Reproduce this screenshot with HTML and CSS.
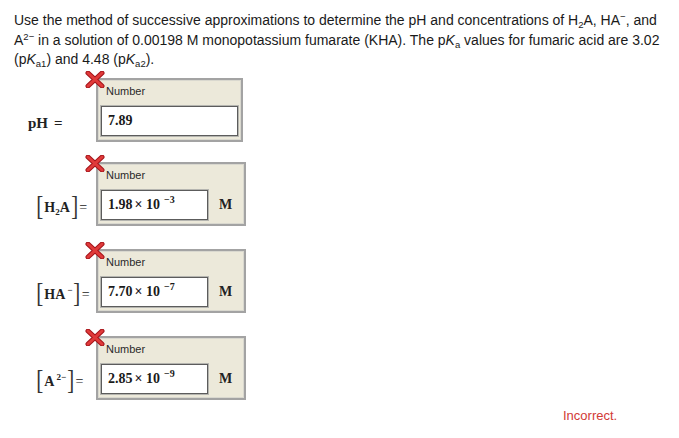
FILE: index.html
```html
<!DOCTYPE html>
<html>
<head>
<meta charset="utf-8">
<link rel="stylesheet" href="styles.css">
</head>
<body>
<p class="q">Use the method of successive approximations to determine the pH and concentrations of H<sub>2</sub>A, HA<sup>−</sup>, and A<sup>2−</sup> in a solution of 0.00198 M monopotassium fumarate (KHA). The p<i>K</i><sub>a</sub> values for fumaric acid are 3.02 (p<i>K</i><sub>a1</sub>) and 4.48 (p<i>K</i><sub>a2</sub>).</p>

<div class="row r1">
  <div class="lab lab-ph">pH<span class="eq">=</span></div>
  <div class="box box-wide">
    <svg class="x" width="20" height="17" viewBox="0 0 20 17"><path d="M3 2 L17 15 M17 2 L3 15" stroke="#a3141a" stroke-width="5" stroke-linecap="round"/><path d="M3 2 L17 15 M17 2 L3 15" stroke="#e03a3a" stroke-width="3" stroke-linecap="round"/></svg>
    <div class="num">Number</div>
    <div class="fields"><div class="inp inp-wide"><span>7.89</span></div></div>
  </div>
</div>

<div class="row r2">
  <div class="lab"><span class="br">[</span><b>H<sub>2</sub>A</b><span class="br">]</span>=</div>
  <div class="box">
    <svg class="x" width="20" height="17" viewBox="0 0 20 17"><path d="M3 2 L17 15 M17 2 L3 15" stroke="#a3141a" stroke-width="5" stroke-linecap="round"/><path d="M3 2 L17 15 M17 2 L3 15" stroke="#e03a3a" stroke-width="3" stroke-linecap="round"/></svg>
    <div class="num">Number</div>
    <div class="fields"><div class="inp"><span>1.98<span class="t">×</span> 10<sup class="e">−3</sup></span></div><div class="unit">M</div></div>
  </div>
</div>

<div class="row r3">
  <div class="lab"><span class="br">[</span><b>HA<sup class="c">−</sup></b><span class="br">]</span>=</div>
  <div class="box">
    <svg class="x" width="20" height="17" viewBox="0 0 20 17"><path d="M3 2 L17 15 M17 2 L3 15" stroke="#a3141a" stroke-width="5" stroke-linecap="round"/><path d="M3 2 L17 15 M17 2 L3 15" stroke="#e03a3a" stroke-width="3" stroke-linecap="round"/></svg>
    <div class="num">Number</div>
    <div class="fields"><div class="inp"><span>7.70<span class="t">×</span> 10<sup class="e">−7</sup></span></div><div class="unit">M</div></div>
  </div>
</div>

<div class="row r4">
  <div class="lab"><span class="br">[</span><b>A<sup class="c">2−</sup></b><span class="br">]</span>=</div>
  <div class="box">
    <svg class="x" width="20" height="17" viewBox="0 0 20 17"><path d="M3 2 L17 15 M17 2 L3 15" stroke="#a3141a" stroke-width="5" stroke-linecap="round"/><path d="M3 2 L17 15 M17 2 L3 15" stroke="#e03a3a" stroke-width="3" stroke-linecap="round"/></svg>
    <div class="num">Number</div>
    <div class="fields"><div class="inp"><span>2.85<span class="t">×</span> 10<sup class="e">−9</sup></span></div><div class="unit">M</div></div>
  </div>
</div>

<div class="result">Incorrect.</div>
</body>
</html>
```

FILE: styles.css
```css
html, body {
  margin: 0;
  padding: 0;
  background: #ffffff;
}
body {
  font-family: "Liberation Sans", Arial, sans-serif;
  color: #1a1a1a;
  width: 679px;
  height: 438px;
  overflow: hidden;
}
.q {
  margin: 0;
  padding: 11px 0 0 14px;
  width: 664px;
  font-size: 14px;
  letter-spacing: 0;
  line-height: 19.5px;
}
.q sub, .q sup {
  font-size: 9.5px;
  line-height: 0;
}
.q sub { vertical-align: -3px; }
.q sup { vertical-align: 5px; }

.row {
  display: flex;
  align-items: flex-end;
}
.r1 { margin-top: 8px; }
.r2 { margin-top: 20px; }
.r3 { margin-top: 23px; }
.r4 { margin-top: 23px; }

.lab {
  width: 96px;
  box-sizing: border-box;
  padding-left: 35px;
  height: 36px;
  display: flex;
  align-items: center;
  font-family: "Liberation Serif", "Times New Roman", serif;
  font-size: 14px;
  color: #222;
}
.lab-ph {
  padding-left: 28px;
  font-weight: bold;
  font-size: 15px;
}
.eq {
  margin-left: 6px;
  font-weight: bold;
}
.lab b {
  font-weight: bold;
}
.lab sub {
  font-size: 9px;
  line-height: 0;
  vertical-align: -3px;
}
.lab sup.c {
  font-size: 9px;
  line-height: 0;
  vertical-align: 6px;
  margin-left: 2px;
}
.br {
  font-size: 28px;
  font-weight: normal;
  line-height: 1;
  transform: scaleX(0.75);
  color: #333;
  margin-top: -4px;
}

.box {
  position: relative;
  box-sizing: border-box;
  width: 150px;
  height: 64px;
  background: #ece9da;
  border: 2px solid #a3a3a3;
  box-shadow: inset 0 0 0 1px #d9d8cf;
  padding: 5px 3px 0 2px;
}
.box-wide {
  width: 147px;
}
.x {
  position: absolute;
  left: -13px;
  top: -9px;
}
.num {
  font-size: 11px;
  line-height: 13px;
  color: #2a2a2a;
  margin-left: 6px;
}
.fields {
  display: flex;
  align-items: center;
  margin-top: 8px;
}
.inp {
  box-sizing: border-box;
  width: 107px;
  height: 30px;
  background: #fff;
  border: 1px solid #5c5c5c;
  box-shadow: 0 0 0 1px #b5b5b0;
  margin-left: 1px;
  padding-left: 6px;
  display: flex;
  align-items: center;
  font-family: "Liberation Serif", "Times New Roman", serif;
  font-weight: bold;
  font-size: 14px;
  color: #1a1a1a;
  white-space: pre;
}
.inp-wide {
  width: 137px;
}
.t {
  font-weight: bold;
  font-size: 14px;
  margin-left: 2px;
}
.e {
  font-size: 10px;
  line-height: 0;
  vertical-align: 6px;
  margin-left: 4px;
}
.unit {
  margin-left: 11px;
  font-family: "Liberation Serif", "Times New Roman", serif;
  font-weight: bold;
  font-size: 14px;
  color: #222;
}
.result {
  margin: 8px 0 0 563px;
  font-size: 13px;
  color: #d23a36;
}
```
